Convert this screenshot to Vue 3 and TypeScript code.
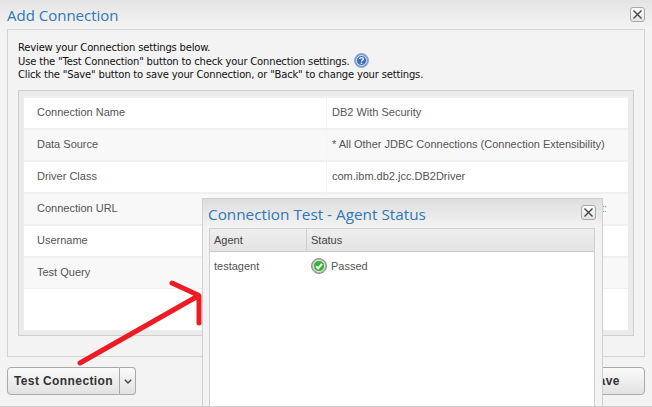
<script setup lang="ts">
const rows: { label: string; value: string; link?: boolean }[] = [
  { label: 'Connection Name', value: 'DB2 With Security' },
  { label: 'Data Source', value: '* All Other JDBC Connections (Connection Extensibility)' },
  { label: 'Driver Class', value: 'com.ibm.db2.jcc.DB2Driver' },
  { label: 'Connection URL', value: 'jdbc:db2://db2server.example.com:50000/SAMPLE:sect:', link: true },
  { label: 'Username', value: '' },
  { label: 'Test Query', value: '' },
]
</script>

<template>
  <div class="page">
    <header class="head">
      <h1 class="title">Add Connection</h1>
      <button class="close" aria-label="Close">
        <svg width="9" height="9" viewBox="0 0 9 9"><path d="M0.5 0.5L8.5 8.5M8.5 0.5L0.5 8.5" stroke="#444" stroke-width="1.4" fill="none" /></svg>
      </button>
    </header>

    <main class="content">
      <p class="intro">
        Review your Connection settings below.<br />
        Use the "Test Connection" button to check your Connection settings.
        <svg class="help" width="15" height="15" viewBox="0 0 15 15">
          <circle cx="7.5" cy="7.5" r="6.9" fill="#7f9fd2" stroke="#7f9fd2" />
          <circle cx="7.5" cy="7.5" r="5" fill="#3f6db5" stroke="#dbe6f5" />
          <path d="M5.6 6C5.7 4.2 9.5 4.2 9.4 6.1C9.3 7.3 7.5 7.3 7.5 8.6" stroke="#fff" stroke-width="1.3" fill="none" />
          <rect x="6.8" y="9.6" width="1.4" height="1.4" fill="#fff" />
        </svg><br />
        Click the "Save" button to save your Connection, or "Back" to change your settings.
      </p>
      <div class="frame">
        <div class="sheet">
          <div v-for="row in rows" :key="row.label" class="row">
            <div class="label">{{ row.label }}</div>
            <div class="value" :class="{ link: row.link }">{{ row.value }}</div>
          </div>
        </div>
      </div>
    </main>

    <footer class="foot">
      <div class="split">
        <button class="btn test">Test Connection</button>
        <button class="btn caret" aria-label="More">
          <svg width="8" height="5" viewBox="0 0 8 5"><path d="M0.8 0.8L4 4L7.2 0.8" stroke="#444" stroke-width="1.4" fill="none" /></svg>
        </button>
      </div>
      <button class="btn save">Save</button>
    </footer>

    <section class="popup">
      <header class="pop-head">
        <h2 class="pop-title">Connection Test - Agent Status</h2>
        <button class="close" aria-label="Close">
          <svg width="9" height="9" viewBox="0 0 9 9"><path d="M0.5 0.5L8.5 8.5M8.5 0.5L0.5 8.5" stroke="#444" stroke-width="1.4" fill="none" /></svg>
        </button>
      </header>
      <div class="grid">
        <div class="grid-head">
          <div class="col-a">Agent</div>
          <div class="col-b">Status</div>
        </div>
        <div class="grid-row">
          <div class="col-a">testagent</div>
          <div class="col-b status">
            <svg width="16" height="16" viewBox="0 0 16 16">
              <circle cx="8" cy="8" r="7.5" fill="#b5b5b5" stroke="#8f8f8f" />
              <circle cx="8" cy="8" r="5.6" fill="#2fb52f" stroke="#e4e4e4" />
              <path d="M5 8.2L7.2 10.4L11 5.8" stroke="#fff" stroke-width="2" fill="none" />
            </svg>
            <span>Passed</span>
          </div>
        </div>
      </div>
    </section>

    <svg class="arrow" width="652" height="407" viewBox="0 0 652 407">
      <path d="M80 363L198 296M172 283L198 295M199 296L199 323" stroke="#ed1c24" stroke-width="5" stroke-linecap="round" fill="none" />
    </svg>
  </div>
</template>

<style>
html, body { margin: 0; padding: 0; overflow: hidden; }
</style>

<style scoped>
.page {
  position: relative;
  width: 652px;
  height: 407px;
  overflow: hidden;
  box-sizing: border-box;
  display: flex;
  flex-direction: column;
  background: #f3f3f3;
  border-bottom: 1px solid #cfcfcf;
  font-family: "Liberation Sans", Arial, sans-serif;
  font-size: 11px;
  color: #555;
}
.head {
  height: 29px;
  flex: none;
  box-sizing: border-box;
  padding: 0 7px;
  display: flex;
  align-items: center;
  justify-content: space-between;
  background: linear-gradient(#e4e4e4, #f4f4f4);
}
.title {
  margin: 1px 0 0;
  font-family: "Open Sans", sans-serif;
  font-size: 15px;
  font-weight: 400;
  color: #2f77b5;
}
.close {
  width: 15px;
  height: 15px;
  padding: 0;
  box-sizing: border-box;
  display: flex;
  align-items: center;
  justify-content: center;
  border: 1px solid #a8a8a8;
  border-radius: 3px;
  background: linear-gradient(#fbfbfb, #e4e4e4);
}
.head .close { margin-top: -1px; }
.content {
  margin: 0 7px;
  height: 328px;
  flex: none;
  box-sizing: border-box;
  border: 1px solid #d3d3d3;
  padding: 11px 10px 0;
}
.intro {
  margin: 0;
  height: 49px;
  font-family: "DejaVu Sans", sans-serif;
  font-size: 10px;
  letter-spacing: -0.18px;
  line-height: 13.5px;
  color: #111;
}
.help { vertical-align: -3px; margin: -3px 0 0 1px; }
.frame {
  box-sizing: border-box;
  height: 246px;
  border: 1px solid #cfcfcf;
  padding: 5px;
  background: #ebebeb;
}
.sheet {
  height: 234px;
  background: #fff;
  display: flex;
  flex-direction: column;
  box-sizing: border-box;
}
.row {
  height: 32px;
  flex: none;
  box-sizing: border-box;
  display: flex;
  align-items: center;
  background: #fff;
  border-top: 2px solid #f0f0f0;
  padding: 0 0 2px 1px;
}
.row:nth-child(even) { background: #f8f8f8; }
.row:last-child { height: 33px; padding-bottom: 3px; border-bottom: 1px solid #f0f0f0; }
.label { width: 302px; padding-left: 12px; box-sizing: border-box; flex: none; }
.value { padding-left: 5px; white-space: nowrap; align-self: stretch; display: flex; align-items: center; flex: 1; border-left: 1px solid #f4f4f4; margin-left: -1px; }
.link { color: #5a9bd0; }
.foot {
  flex: 1;
  display: flex;
  align-items: flex-start;
  justify-content: space-between;
  padding: 10px 7px 0;
}
.split { display: flex; }
.btn {
  height: 28px;
  box-sizing: border-box;
  border: 1px solid #a9a9a9;
  background: linear-gradient(#fafafa, #e2e2e2);
  font-family: "Liberation Sans", sans-serif;
  font-weight: 700;
  font-size: 12px;
  letter-spacing: 0.4px;
  color: #333;
  padding: 0;
}
.test { width: 113px; border-radius: 4px 0 0 4px; }
.caret {
  width: 16px;
  border-left: 0;
  border-radius: 0 4px 4px 0;
  display: flex;
  align-items: center;
  justify-content: center;
}
.save { width: 70px; border-radius: 4px; padding-right: 10px; }
.popup {
  position: absolute;
  left: 202px;
  top: 198px;
  width: 401px;
  height: 220px;
  box-sizing: border-box;
  border: 1px solid #d0d0d0;
  background: #f3f3f3;
  padding: 0 7px 0 6px;
}
.pop-head {
  height: 29px;
  margin: 0 -7px 0 -6px;
  padding: 0 6px 0 5px;
  display: flex;
  align-items: center;
  justify-content: space-between;
  background: linear-gradient(#dedede, #f3f3f3);
}
.pop-title {
  margin: 0;
  font-family: "Open Sans", sans-serif;
  font-size: 15.3px;
  font-weight: 400;
  color: #2f77b5;
}
.pop-head .close { margin-top: -3px; }
.grid {
  height: 200px;
  background: #fff;
  border: 1px solid #cfcfcf;
}
.grid-head {
  height: 23px;
  box-sizing: border-box;
  display: flex;
  align-items: center;
  background: linear-gradient(#efefef, #e3e3e3);
  border-bottom: 1px solid #c9c9c9;
  color: #444;
}
.col-a { width: 96px; padding-left: 4px; box-sizing: border-box; }
.col-b { padding-left: 4px; }
.grid-head .col-b { border-left: 1px solid #cfcfcf; height: 22px; line-height: 22px; }
.grid-row { height: 28px; display: flex; align-items: center; }
.status { display: flex; align-items: center; gap: 4px; padding-left: 5px; }
.arrow { position: absolute; left: 0; top: 0; pointer-events: none; }
</style>
